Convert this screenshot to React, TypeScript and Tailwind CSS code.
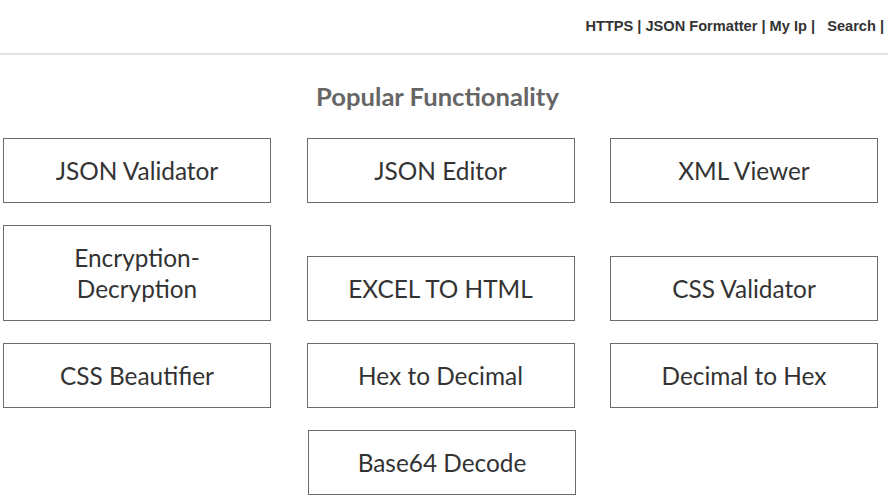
import React from "react";

const Box = ({ children }: { children: React.ReactNode }) => (
  <div className="w-[268px] shrink-0 border border-[#6b6b6b] px-2 py-[16px] text-center text-[24.4px] leading-[31px] text-[#333]">
    {children}
  </div>
);

export default function App() {
  return (
    <div className="min-h-[500px] w-[888px] bg-white" style={{ fontFamily: "Lato, 'Open Sans', sans-serif" }}>
      <header
        className="flex h-[55px] items-center justify-end border-b-2 border-[#e3e3e3] pr-[4px] text-[14.6px] font-bold text-[#333]"
        style={{ fontFamily: "'Liberation Sans', Arial, sans-serif" }}
      >
        <span className="whitespace-pre">HTTPS | JSON Formatter | My Ip |   Search |</span>
      </header>
      <h2 className="mt-[25px] pr-[13px] text-center text-[25.6px] font-bold leading-[32px] text-[#666]">Popular Functionality</h2>
      <div className="mt-[26px] flex flex-col gap-[22px]">
        <div className="flex gap-[35.5px] pl-[3px]">
          <Box>JSON Validator</Box>
          <Box>JSON Editor</Box>
          <Box>XML Viewer</Box>
        </div>
        <div className="flex items-end gap-[35.5px] pl-[3px]">
          <Box>
            Encryption-
            <br />
            Decryption
          </Box>
          <Box>EXCEL TO HTML</Box>
          <Box>CSS Validator</Box>
        </div>
        <div className="flex gap-[35.5px] pl-[3px]">
          <Box>CSS Beautifier</Box>
          <Box>Hex to Decimal</Box>
          <Box>Decimal to Hex</Box>
        </div>
        <div className="flex pl-[308px]">
          <Box>Base64 Decode</Box>
        </div>
      </div>
    </div>
  );
}
